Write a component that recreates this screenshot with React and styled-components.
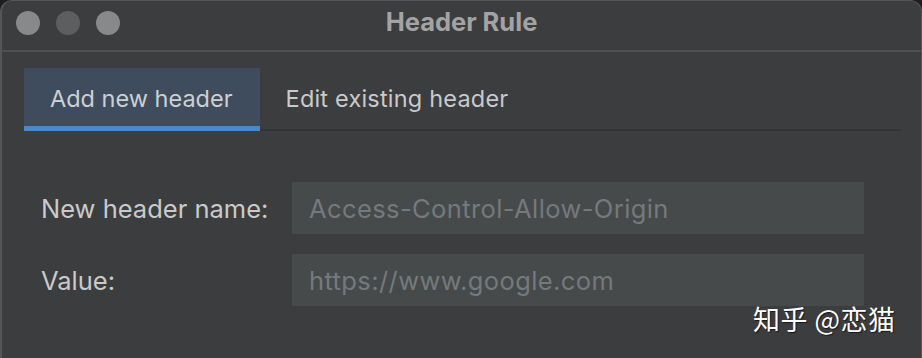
import React from 'react';
import styled, { createGlobalStyle } from 'styled-components';

const GlobalStyle = createGlobalStyle`
  html, body {
    margin: 0;
    padding: 0;
    background: #1e1e1f;
  }
  body {
    font-family: Inter, "Noto Sans", "Noto Sans CJK SC", sans-serif;
    -webkit-font-smoothing: antialiased;
  }
`;

const Window = styled.div`
  width: 922px;
  height: 358px;
  box-sizing: border-box;
  background: #3c3d3f;
  border-left: 2px solid #545557;
  border-top: 1px solid #545557;
  border-right: 1px solid #545557;
  border-radius: 12px 12px 0 0;
  overflow: hidden;
  position: relative;
`;

const TitleBar = styled.div`
  height: 51px;
  display: flex;
  align-items: center;
  position: relative;
  border-bottom: 2px solid #4f5052;
  box-sizing: border-box;
  padding-bottom: 5px;
`;

const Lights = styled.div`
  display: flex;
  gap: 16px;
  padding-left: 14px;
`;

const Light = styled.span`
  width: 24px;
  height: 24px;
  border-radius: 50%;
  background: ${p => (p.$dim ? '#5d5e60' : '#88898b')};
`;

const Title = styled.div`
  position: absolute;
  left: 0;
  right: 0;
  top: 0;
  bottom: 8px;
  display: flex;
  align-items: center;
  justify-content: center;
  font-size: 25.5px;
  font-weight: 700;
  color: #a3a3a4;
  pointer-events: none;
`;

const Body = styled.div`
  padding: 16px 20px 0 22px;
`;

const Tabs = styled.div`
  display: flex;
  height: 63px;
  border-bottom: 2px solid #333436;
  box-sizing: border-box;
`;

const Tab = styled.div`
  display: flex;
  align-items: center;
  padding: 2px 27px 0 26px;
  font-size: 23.5px;
  letter-spacing: ${p => (p.$active ? '0' : '0.2px')};
  color: ${p => (p.$active ? '#cdd0d3' : '#c9cacb')};
  background: ${p => (p.$active ? '#3e4c5e' : 'transparent')};
  border-bottom: 5px solid ${p => (p.$active ? '#4b88c8' : 'transparent')};
  margin-bottom: -2px;
  box-sizing: border-box;
`;

const Form = styled.div`
  display: grid;
  grid-template-columns: 251px 572px;
  row-gap: 20px;
  align-items: center;
  padding: 51px 0 0 17px;
`;

const Label = styled.div`
  font-size: 25.5px;
  color: #c9cacb;
`;

const Field = styled.div`
  height: 52px;
  background: #464a4b;
  display: flex;
  align-items: center;
  padding-left: 17px;
  font-size: 25.5px;
  letter-spacing: 0.4px;
  color: #76797b;
  box-sizing: border-box;
`;

const Watermark = styled.div`
  position: absolute;
  left: 751px;
  top: 298px;
  font-size: 27px;
  color: #ffffff;
  font-family: "Noto Sans CJK SC", "Noto Sans", sans-serif;
  text-shadow: 1px 1px 1px rgba(0, 0, 0, 0.6);
  letter-spacing: 0.5px;
`;

export default function App() {
  return (
    <>
      <GlobalStyle />
      <Window>
        <TitleBar>
          <Lights>
            <Light />
            <Light $dim />
            <Light />
          </Lights>
          <Title>Header Rule</Title>
        </TitleBar>
        <Body>
          <Tabs>
            <Tab $active>Add new header</Tab>
            <Tab>Edit existing header</Tab>
          </Tabs>
          <Form>
            <Label>New header name:</Label>
            <Field>Access-Control-Allow-Origin</Field>
            <Label>Value:</Label>
            <Field>https://www.google.com</Field>
          </Form>
        </Body>
        <Watermark>知乎 @恋猫</Watermark>
      </Window>
    </>
  );
}
